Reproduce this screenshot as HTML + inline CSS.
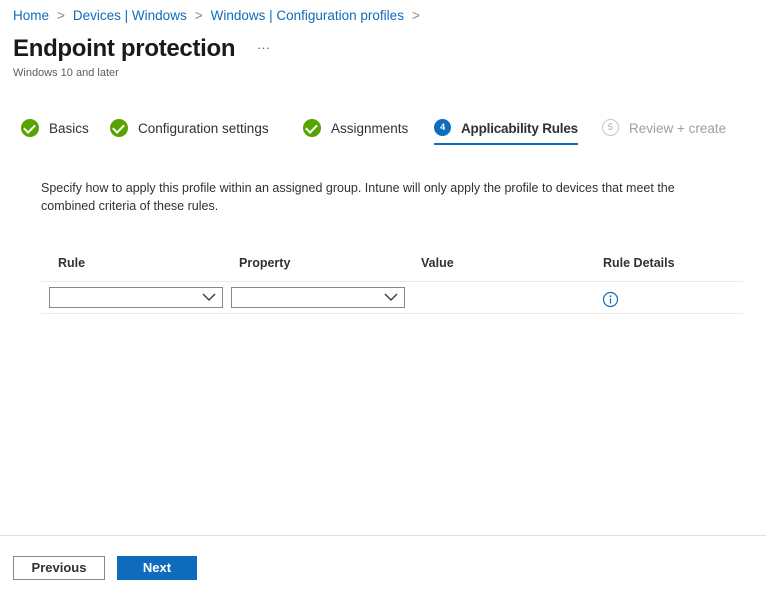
<!DOCTYPE html>
<html><head><style>
body{margin:0;width:766px;height:595px;background:#fff;font-family:"Liberation Sans",sans-serif;position:relative;overflow:hidden;color:#323130}
.a{position:absolute;white-space:nowrap}
.bc{top:8px;left:13px;font-size:13.5px;color:#0f6cbd}
.bc span{color:#888;margin:0 8px}
.ck{display:inline-block;width:18px;height:18px;border-radius:50%;background:#57a300;vertical-align:middle;position:relative}
.ck:after{content:"";position:absolute;left:5px;top:3px;width:5px;height:9px;border:solid #fff;border-width:0 2.4px 2.4px 0;transform:rotate(45deg)}
.st{top:121px;font-size:13.5px}
.st .ck{margin-right:10px;margin-top:-3px}
.sel{position:absolute;top:287px;height:21px;border:1px solid #8a8886;box-sizing:border-box}
.sel svg{position:absolute;right:6px;top:5px}
.hr{position:absolute;left:41px;width:702px;height:1px;background:#edebe9}
.btn{position:absolute;top:556px;height:24px;box-sizing:border-box;font-size:13px;font-weight:bold;text-align:center;line-height:22px}
</style></head><body>
<div class="a bc">Home<span>&gt;</span>Devices | Windows<span>&gt;</span>Windows | Configuration profiles<span>&gt;</span></div>
<div class="a" style="top:35px;left:13px;font-size:24px;font-weight:bold;color:#1b1a19;letter-spacing:-.3px">Endpoint protection</div>
<div class="a" style="top:40px;left:257px;font-size:13px;color:#666">···</div>
<div class="a" style="top:67px;left:13px;font-size:11px;color:#605e5c">Windows 10 and later</div>
<div class="a st" style="left:21px"><span class="ck"></span>Basics</div>
<div class="a st" style="left:110px"><span class="ck"></span>Configuration settings</div>
<div class="a st" style="left:303px"><span class="ck"></span>Assignments</div>
<div class="a st" style="left:434px;font-weight:bold;letter-spacing:-.2px"><span style="display:inline-block;width:17px;height:17px;border-radius:50%;background:#0f6cbd;color:#fff;font-size:9px;text-align:center;line-height:17px;margin-right:10px;vertical-align:middle;margin-top:-3px">4</span>Applicability Rules</div>
<div class="a" style="left:434px;top:143px;width:144px;height:2px;background:#0f6cbd"></div>
<div class="a st" style="left:602px;color:#a19f9d"><span style="display:inline-block;width:15px;height:15px;border-radius:50%;border:1px solid #c8c6c4;font-size:9px;text-align:center;line-height:15px;margin-right:10px;vertical-align:middle;margin-top:-3px">5</span>Review + create</div>
<div class="a" style="top:179px;left:41px;font-size:12.5px;line-height:18px;color:#323130;white-space:normal;width:670px">Specify how to apply this profile within an assigned group. Intune will only apply the profile to devices that meet the combined criteria of these rules.</div>
<div class="a" style="top:256px;left:58px;font-size:12.5px;font-weight:bold">Rule</div>
<div class="a" style="top:256px;left:239px;font-size:12.5px;font-weight:bold">Property</div>
<div class="a" style="top:256px;left:421px;font-size:12.5px;font-weight:bold">Value</div>
<div class="a" style="top:256px;left:603px;font-size:12.5px;font-weight:bold">Rule Details</div>
<div class="hr" style="top:281px"></div>
<div class="hr" style="top:313px"></div>
<div class="sel" style="left:49px;width:174px"><svg width="14" height="9"><path d="M1 1l6 6 6-6" stroke="#323130" fill="none" stroke-width="1.3"/></svg></div>
<div class="sel" style="left:231px;width:174px"><svg width="14" height="9"><path d="M1 1l6 6 6-6" stroke="#323130" fill="none" stroke-width="1.3"/></svg></div>
<svg class="a" style="left:602px;top:291px" width="17" height="17"><circle cx="8.5" cy="8.5" r="7" stroke="#0f6cbd" fill="none" stroke-width="1.2"/><circle cx="8.5" cy="5.2" r=".9" fill="#0f6cbd"/><path d="M8.5 7.5v5" stroke="#0f6cbd" stroke-width="1.2"/></svg>
<div class="a" style="left:0;top:535px;width:766px;height:1px;background:#e1dfdd"></div>
<div class="btn" style="left:13px;width:92px;border:1px solid #8a8886;color:#323130">Previous</div>
<div class="btn" style="left:117px;width:80px;background:#0f6cbd;color:#fff;line-height:24px">Next</div>
</body></html>
